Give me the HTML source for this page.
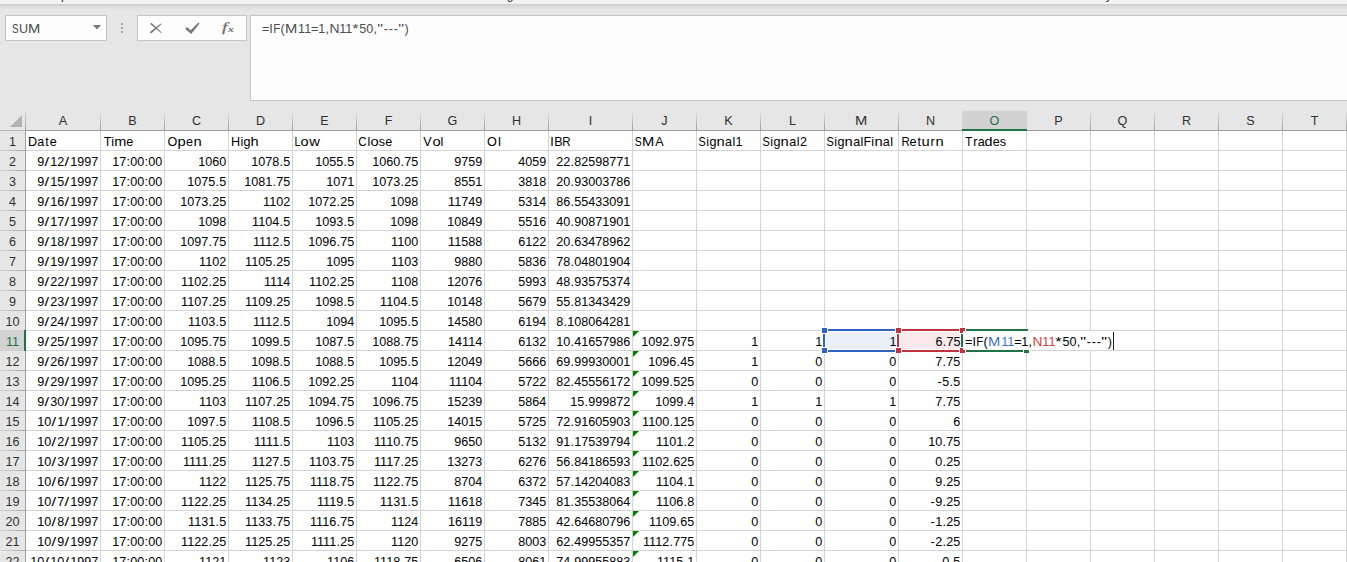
<!DOCTYPE html>
<html lang="en"><head><meta charset="utf-8"><title>Excel - formula editing</title>
<style>
html,body{margin:0;padding:0}
body{width:1347px;height:562px;overflow:hidden;position:relative;background:#e6e6e6;font-family:"Liberation Sans",sans-serif;font-size:12.6px;color:#000}
div,span{box-sizing:border-box}
i{font-style:normal}
.abs,.c,.rh,.ch,.vl,.hl{position:absolute}
#top{left:0;top:0;width:1347px;height:4px;background:#f3f2f1}
#shade{left:0;top:4px;width:1347px;height:6px;background:linear-gradient(#cbcac9,#d3d3d3 20%,#dedede 55%,#e6e6e6)}
.rib{top:-13px;font-size:12px;color:#333;white-space:nowrap;height:17px;line-height:17px}
.box{background:#fdfdfd;border:1px solid #c5c5c5}
#name{left:5px;top:15px;width:102px;height:26px}
#name span{position:absolute;left:6px;top:1px;line-height:24px;color:#4a4a4a;white-space:nowrap}
#btns{left:137px;top:15px;width:110px;height:26px}
#fbar{left:250px;top:15px;width:1100px;height:86px}
#ftxt{left:262.1px;top:17px;line-height:24px;color:#4d4d4d;white-space:nowrap}
#sheet{left:0;top:111px;width:1347px;height:451px;background:#fff;overflow:hidden}
.c{height:20px;line-height:20px;white-space:nowrap;overflow:visible;margin-top:1px}
.r{text-align:right}
.vl{width:1px;background:#d4d4d4;top:20px;height:440px}
.hl{height:1px;background:#d4d4d4;left:26px;width:1321px}
.ch{top:0;height:19px;line-height:21px;text-align:center;color:#303030;background:#e6e6e6}
.cs{top:0;width:1px;height:19px;background:linear-gradient(rgba(155,155,155,0),#9b9b9b)}
.rh{left:0;width:25px;height:19px;line-height:23px;text-align:center;color:#303030;background:#e6e6e6;overflow:hidden}
.rs{left:0;width:25px;height:1px;background:linear-gradient(90deg,rgba(171,171,171,.3),#ababab)}
.tri{width:0;height:0;border-top:6px solid #008000;border-right:6px solid transparent}
</style></head><body>
<div class="abs" id="top"></div><div class="abs" id="shade"></div>
<div class="abs rib" style="left:47px">Clipboard</div><div class="abs rib" style="left:493.5px">Alignment</div><div class="abs rib" style="left:1094.5px">Styles</div>
<div class="abs box" id="name"><span><i style="margin:0 -0.9px 0 -0.9px;display:inline-block;transform:scaleX(0.79)">S</i><i style="margin:0 0.25px 0 0.25px">U</i><i style="margin:0 1.05px 0 1.05px;display:inline-block;transform:scaleX(1.17)">M</i></span><svg class="abs" style="left:87px;top:9px" width="8" height="5" viewBox="0 0 8 5"><path d="M0 0H8L4 4.5Z" fill="#777"/></svg></div>
<svg class="abs" style="left:121px;top:23px" width="2" height="10"><rect x="0" y="0" width="2" height="2" fill="#a6a6a6"/><rect x="0" y="4" width="2" height="2" fill="#a6a6a6"/><rect x="0" y="8" width="2" height="2" fill="#a6a6a6"/></svg>
<div class="abs box" id="btns"></div><svg class="abs" style="left:145px;top:18px" width="100" height="20" viewBox="145 18 100 20"><path d="M150.2 24.1L151.4 22.8L161.7 32.4L161.0 33.1Z" fill="#767676"/><path d="M149.9 31.9L151.2 33.4L161.5 24.3L160.8 23.6Z" fill="#767676"/><path d="M187.0 27.1L190.7 30.3L198.4 22.6L199.5 23.5L191.2 34.1L185.3 29.0Z" fill="#777"/></svg><span class="abs" style="left:221.6px;top:16.6px;font:italic 13px/20px 'Liberation Serif',serif;color:#6e6e6e;-webkit-text-stroke:.25px #6e6e6e;white-space:nowrap"><span style="display:inline-block;transform:scaleX(1.5);transform-origin:0 50%">f</span><span style="font-size:8px;font-weight:bold;-webkit-text-stroke:0;display:inline-block;transform:scaleX(1.5);transform-origin:0 50%;margin-left:3.1px;position:relative;top:1.1px">x</span></span>
<div class="abs box" id="fbar"></div><div class="abs" id="ftxt"><i style="margin:0 -0.18px 0 -0.18px">=</i><i style="margin:0 0.25px 0 0.25px">I</i><i style="margin:0 -0.35px 0 -0.35px;display:inline-block;transform:scaleX(0.91)">F</i><i style="margin:0 0.4px 0 0.4px">(</i><i style="margin:0 1.25px 0 1.25px;display:inline-block;transform:scaleX(1.17)">M</i>11<i style="margin:0 -0.18px 0 -0.18px">=</i>1<i style="margin:0 0.25px 0 0.25px">,</i><i style="margin:0 0.45px 0 0.45px;display:inline-block;transform:scaleX(1.1)">N</i>11<i style="margin:0 1.05px 0 1.05px;display:inline-block;transform:scaleX(1.3)">*</i>50<i style="margin:0 0.25px 0 0.25px">,</i><i style="margin:0 0.76px 0 0.76px;display:inline-block;transform:scaleX(1.3)">&quot;</i><i style="margin:0 0.4px 0 0.4px">-</i><i style="margin:0 0.4px 0 0.4px">-</i><i style="margin:0 0.4px 0 0.4px">-</i><i style="margin:0 0.76px 0 0.76px;display:inline-block;transform:scaleX(1.3)">&quot;</i><i style="margin:0 0.4px 0 0.4px">)</i></div>
<div class="abs" id="sheet">
<div class="abs" style="left:0;top:0;width:1347px;height:19px;background:#e6e6e6"></div><div class="abs" style="left:0;top:19px;width:1347px;height:1px;background:#9e9e9e"></div><div class="abs" style="left:0;top:19px;width:25px;height:1px;background:#b4b4b4"></div><div class="abs" style="left:0;top:20px;width:25px;height:440px;background:#e6e6e6"></div><div class="abs" style="left:25px;top:0;width:1px;height:460px;background:linear-gradient(rgba(160,160,160,.2),#a0a0a0 19px)"></div><svg class="abs" style="left:10px;top:4px" width="13" height="13"><path d="M12 0V12H0Z" fill="#b2b2b2"/></svg>
<div class="ch" style="left:26px;width:74px">A</div><div class="abs cs" style="left:100px"></div><div class="ch" style="left:101px;width:63px">B</div><div class="abs cs" style="left:164px"></div><div class="ch" style="left:165px;width:63px">C</div><div class="abs cs" style="left:228px"></div><div class="ch" style="left:229px;width:63px">D</div><div class="abs cs" style="left:292px"></div><div class="ch" style="left:293px;width:63px">E</div><div class="abs cs" style="left:356px"></div><div class="ch" style="left:357px;width:63px">F</div><div class="abs cs" style="left:420px"></div><div class="ch" style="left:421px;width:63px">G</div><div class="abs cs" style="left:484px"></div><div class="ch" style="left:485px;width:63px">H</div><div class="abs cs" style="left:548px"></div><div class="ch" style="left:549px;width:83px">I</div><div class="abs cs" style="left:632px"></div><div class="ch" style="left:633px;width:63px">J</div><div class="abs cs" style="left:696px"></div><div class="ch" style="left:697px;width:63px">K</div><div class="abs cs" style="left:760px"></div><div class="ch" style="left:761px;width:63px">L</div><div class="abs cs" style="left:824px"></div><div class="ch" style="left:825px;width:73px"><i style="margin:0 1.25px 0 1.25px;display:inline-block;transform:scaleX(1.17)">M</i></div><div class="abs cs" style="left:898px"></div><div class="ch" style="left:899px;width:63px">N</div><div class="ch" style="left:962px;width:65px;background:#d2d2d2;color:#217346;height:20px;border-bottom:2px solid #217346">O</div><div class="ch" style="left:1027px;width:63px">P</div><div class="abs cs" style="left:1090px"></div><div class="ch" style="left:1091px;width:63px">Q</div><div class="abs cs" style="left:1154px"></div><div class="ch" style="left:1155px;width:63px">R</div><div class="abs cs" style="left:1218px"></div><div class="ch" style="left:1219px;width:63px">S</div><div class="abs cs" style="left:1282px"></div><div class="ch" style="left:1283px;width:63px">T</div><div class="abs cs" style="left:1346px"></div>
<div class="vl" style="left:100px"></div><div class="vl" style="left:164px"></div><div class="vl" style="left:228px"></div><div class="vl" style="left:292px"></div><div class="vl" style="left:356px"></div><div class="vl" style="left:420px"></div><div class="vl" style="left:484px"></div><div class="vl" style="left:548px"></div><div class="vl" style="left:632px"></div><div class="vl" style="left:696px"></div><div class="vl" style="left:760px"></div><div class="vl" style="left:824px"></div><div class="vl" style="left:898px"></div><div class="vl" style="left:962px"></div><div class="vl" style="left:1026px"></div><div class="vl" style="left:1090px"></div><div class="vl" style="left:1154px"></div><div class="vl" style="left:1218px"></div><div class="vl" style="left:1282px"></div><div class="vl" style="left:1346px"></div><div class="hl" style="top:39px"></div><div class="hl" style="top:59px"></div><div class="hl" style="top:79px"></div><div class="hl" style="top:99px"></div><div class="hl" style="top:119px"></div><div class="hl" style="top:139px"></div><div class="hl" style="top:159px"></div><div class="hl" style="top:179px"></div><div class="hl" style="top:199px"></div><div class="hl" style="top:219px"></div><div class="hl" style="top:239px"></div><div class="hl" style="top:259px"></div><div class="hl" style="top:279px"></div><div class="hl" style="top:299px"></div><div class="hl" style="top:319px"></div><div class="hl" style="top:339px"></div><div class="hl" style="top:359px"></div><div class="hl" style="top:379px"></div><div class="hl" style="top:399px"></div><div class="hl" style="top:419px"></div><div class="hl" style="top:439px"></div><div class="hl" style="top:459px"></div>
<div class="rh" style="top:20px">1</div><div class="abs rs" style="top:39px"></div><div class="rh" style="top:40px">2</div><div class="abs rs" style="top:59px"></div><div class="rh" style="top:60px">3</div><div class="abs rs" style="top:79px"></div><div class="rh" style="top:80px">4</div><div class="abs rs" style="top:99px"></div><div class="rh" style="top:100px">5</div><div class="abs rs" style="top:119px"></div><div class="rh" style="top:120px">6</div><div class="abs rs" style="top:139px"></div><div class="rh" style="top:140px">7</div><div class="abs rs" style="top:159px"></div><div class="rh" style="top:160px">8</div><div class="abs rs" style="top:179px"></div><div class="rh" style="top:180px">9</div><div class="abs rs" style="top:199px"></div><div class="rh" style="top:200px">10</div><div class="abs rs" style="top:219px"></div><div class="rh" style="top:219px;height:21px;line-height:25px;background:#d2d2d2;color:#217346;width:26px;border-right:2px solid #217346;padding-left:1px">11</div><div class="rh" style="top:240px">12</div><div class="abs rs" style="top:259px"></div><div class="rh" style="top:260px">13</div><div class="abs rs" style="top:279px"></div><div class="rh" style="top:280px">14</div><div class="abs rs" style="top:299px"></div><div class="rh" style="top:300px">15</div><div class="abs rs" style="top:319px"></div><div class="rh" style="top:320px">16</div><div class="abs rs" style="top:339px"></div><div class="rh" style="top:340px">17</div><div class="abs rs" style="top:359px"></div><div class="rh" style="top:360px">18</div><div class="abs rs" style="top:379px"></div><div class="rh" style="top:380px">19</div><div class="abs rs" style="top:399px"></div><div class="rh" style="top:400px">20</div><div class="abs rs" style="top:419px"></div><div class="rh" style="top:420px">21</div><div class="abs rs" style="top:439px"></div><div class="rh" style="top:440px">22</div><div class="abs rs" style="top:459px"></div>
<div class="c" style="left:27.89px;top:20px"><i style="margin:0 0.07px 0 0.07px">D</i><i style="margin:0 0.11px 0 0.11px">a</i><i style="margin:0 0.86px 0 0.86px">t</i><i style="margin:0 0.11px 0 0.11px">e</i></div><div class="c" style="left:103.95px;top:20px"><i style="margin:0 -0.3px 0 -0.3px">T</i><i style="margin:0 0.15px 0 0.15px">i</i><i style="margin:0 0.8px 0 0.8px;display:inline-block;transform:scaleX(1.15)">m</i>e</div><div class="c" style="left:167.22px;top:20px"><i style="margin:0 0.27px 0 0.27px">O</i><i style="margin:0 0.67px 0 0.67px;display:inline-block;transform:scaleX(1.17)">p</i><i style="margin:0 0.17px 0 0.17px">e</i><i style="margin:0 0.67px 0 0.67px;display:inline-block;transform:scaleX(1.17)">n</i></div><div class="c" style="left:231.12px;top:20px">H<i style="margin:0 0.18px 0 0.18px">i</i><i style="margin:0 0.07px 0 0.07px">g</i><i style="margin:0 0.57px 0 0.57px;display:inline-block;transform:scaleX(1.16)">h</i></div><div class="c" style="left:294.78px;top:20px"><i style="margin:0 -0.49px 0 -0.49px;display:inline-block;transform:scaleX(0.86)">L</i><i style="margin:0 0.51px 0 0.51px;display:inline-block;transform:scaleX(1.15)">o</i><i style="margin:0 0.97px 0 0.97px;display:inline-block;transform:scaleX(1.17)">w</i></div><div class="c" style="left:358.83px;top:20px"><i style="margin:0 -0.38px 0 -0.38px;display:inline-block;transform:scaleX(0.92)">C</i><i style="margin:0 0.27px 0 0.27px">l</i><i style="margin:0 0.67px 0 0.67px;display:inline-block;transform:scaleX(1.17)">o</i>s<i style="margin:0 0.17px 0 0.17px">e</i></div><div class="c" style="left:422.77px;top:20px"><i style="margin:0 0.43px 0 0.43px">V</i><i style="margin:0 0.63px 0 0.63px;display:inline-block;transform:scaleX(1.17)">o</i><i style="margin:0 0.24px 0 0.24px">l</i></div><div class="c" style="left:486.5px;top:20px"><i style="margin:0 0.4px 0 0.4px">O</i><i style="margin:0 0.55px 0 0.55px">I</i></div><div class="c" style="left:549.93px;top:20px"><i style="margin:0 0.41px 0 0.41px">I</i>B<i style="margin:0 -0.38px 0 -0.38px;display:inline-block;transform:scaleX(0.92)">R</i></div><div class="c" style="left:635px;top:20px"><i style="margin:0 -0.7px 0 -0.7px;display:inline-block;transform:scaleX(0.83)">S</i><i style="margin:0 1.25px 0 1.25px;display:inline-block;transform:scaleX(1.17)">M</i><i style="margin:0 0.3px 0 0.3px">A</i></div><div class="c" style="left:698.87px;top:20px"><i style="margin:0 -0.57px 0 -0.57px;display:inline-block;transform:scaleX(0.86)">S</i><i style="margin:0 0.23px 0 0.23px">i</i><i style="margin:0 0.13px 0 0.13px">g</i><i style="margin:0 0.63px 0 0.63px;display:inline-block;transform:scaleX(1.17)">n</i><i style="margin:0 0.13px 0 0.13px">a</i><i style="margin:0 0.23px 0 0.23px">l</i><i style="margin:0 0.13px 0 0.13px">1</i></div><div class="c" style="left:762.74px;top:20px"><i style="margin:0 -0.54px 0 -0.54px;display:inline-block;transform:scaleX(0.87)">S</i><i style="margin:0 0.27px 0 0.27px">i</i><i style="margin:0 0.16px 0 0.16px">g</i><i style="margin:0 0.66px 0 0.66px;display:inline-block;transform:scaleX(1.17)">n</i><i style="margin:0 0.16px 0 0.16px">a</i><i style="margin:0 0.27px 0 0.27px">l</i><i style="margin:0 0.16px 0 0.16px">2</i></div><div class="c" style="left:826.63px;top:20px"><i style="margin:0 -0.53px 0 -0.53px;display:inline-block;transform:scaleX(0.87)">S</i><i style="margin:0 0.27px 0 0.27px">i</i><i style="margin:0 0.17px 0 0.17px">g</i><i style="margin:0 0.67px 0 0.67px;display:inline-block;transform:scaleX(1.17)">n</i><i style="margin:0 0.17px 0 0.17px">a</i><i style="margin:0 0.27px 0 0.27px">l</i><i style="margin:0 -0.18px 0 -0.18px">F</i><i style="margin:0 0.27px 0 0.27px">i</i><i style="margin:0 0.67px 0 0.67px;display:inline-block;transform:scaleX(1.17)">n</i><i style="margin:0 0.17px 0 0.17px">a</i><i style="margin:0 0.27px 0 0.27px">l</i></div><div class="c" style="left:901.08px;top:20px"><i style="margin:0 -0.42px 0 -0.42px;display:inline-block;transform:scaleX(0.91)">R</i><i style="margin:0 0.12px 0 0.12px">e</i><i style="margin:0 0.87px 0 0.87px">t</i><i style="margin:0 0.62px 0 0.62px;display:inline-block;transform:scaleX(1.17)">u</i><i style="margin:0 0.53px 0 0.53px">r</i><i style="margin:0 0.62px 0 0.62px;display:inline-block;transform:scaleX(1.17)">n</i></div><div class="c" style="left:965.8px;top:20px"><i style="margin:0 -0.35px 0 -0.35px;display:inline-block;transform:scaleX(0.91)">T</i><i style="margin:0 0.4px 0 0.4px">r</i>a<i style="margin:0 0.5px 0 0.5px;display:inline-block;transform:scaleX(1.14)">d</i>e<i style="margin:0 -0.15px 0 -0.15px">s</i></div>
<div class="c r" style="left:26px;top:40px;width:72.2px">9<i style="margin:0 1.25px 0 1.25px;display:inline-block;transform:scaleX(1.3)">/</i>12<i style="margin:0 1.25px 0 1.25px;display:inline-block;transform:scaleX(1.3)">/</i>1997</div><div class="c r" style="left:101px;top:40px;width:61.2px">17<i style="margin:0 0.25px 0 0.25px">:</i>00<i style="margin:0 0.25px 0 0.25px">:</i>00</div><div class="c r" style="left:165px;top:40px;width:61.2px">1060</div><div class="c r" style="left:229px;top:40px;width:61.2px">1078<i style="margin:0 0.25px 0 0.25px">.</i>5</div><div class="c r" style="left:293px;top:40px;width:61.2px">1055<i style="margin:0 0.25px 0 0.25px">.</i>5</div><div class="c r" style="left:357px;top:40px;width:61.2px">1060<i style="margin:0 0.25px 0 0.25px">.</i>75</div><div class="c r" style="left:421px;top:40px;width:61.2px">9759</div><div class="c r" style="left:485px;top:40px;width:61.2px">4059</div><div class="c r" style="left:549px;top:40px;width:81.2px">22<i style="margin:0 0.25px 0 0.25px">.</i>82598771</div>
<div class="c r" style="left:26px;top:60px;width:72.2px">9<i style="margin:0 1.25px 0 1.25px;display:inline-block;transform:scaleX(1.3)">/</i>15<i style="margin:0 1.25px 0 1.25px;display:inline-block;transform:scaleX(1.3)">/</i>1997</div><div class="c r" style="left:101px;top:60px;width:61.2px">17<i style="margin:0 0.25px 0 0.25px">:</i>00<i style="margin:0 0.25px 0 0.25px">:</i>00</div><div class="c r" style="left:165px;top:60px;width:61.2px">1075<i style="margin:0 0.25px 0 0.25px">.</i>5</div><div class="c r" style="left:229px;top:60px;width:61.2px">1081<i style="margin:0 0.25px 0 0.25px">.</i>75</div><div class="c r" style="left:293px;top:60px;width:61.2px">1071</div><div class="c r" style="left:357px;top:60px;width:61.2px">1073<i style="margin:0 0.25px 0 0.25px">.</i>25</div><div class="c r" style="left:421px;top:60px;width:61.2px">8551</div><div class="c r" style="left:485px;top:60px;width:61.2px">3818</div><div class="c r" style="left:549px;top:60px;width:81.2px">20<i style="margin:0 0.25px 0 0.25px">.</i>93003786</div>
<div class="c r" style="left:26px;top:80px;width:72.2px">9<i style="margin:0 1.25px 0 1.25px;display:inline-block;transform:scaleX(1.3)">/</i>16<i style="margin:0 1.25px 0 1.25px;display:inline-block;transform:scaleX(1.3)">/</i>1997</div><div class="c r" style="left:101px;top:80px;width:61.2px">17<i style="margin:0 0.25px 0 0.25px">:</i>00<i style="margin:0 0.25px 0 0.25px">:</i>00</div><div class="c r" style="left:165px;top:80px;width:61.2px">1073<i style="margin:0 0.25px 0 0.25px">.</i>25</div><div class="c r" style="left:229px;top:80px;width:61.2px">1102</div><div class="c r" style="left:293px;top:80px;width:61.2px">1072<i style="margin:0 0.25px 0 0.25px">.</i>25</div><div class="c r" style="left:357px;top:80px;width:61.2px">1098</div><div class="c r" style="left:421px;top:80px;width:61.2px">11749</div><div class="c r" style="left:485px;top:80px;width:61.2px">5314</div><div class="c r" style="left:549px;top:80px;width:81.2px">86<i style="margin:0 0.25px 0 0.25px">.</i>55433091</div>
<div class="c r" style="left:26px;top:100px;width:72.2px">9<i style="margin:0 1.25px 0 1.25px;display:inline-block;transform:scaleX(1.3)">/</i>17<i style="margin:0 1.25px 0 1.25px;display:inline-block;transform:scaleX(1.3)">/</i>1997</div><div class="c r" style="left:101px;top:100px;width:61.2px">17<i style="margin:0 0.25px 0 0.25px">:</i>00<i style="margin:0 0.25px 0 0.25px">:</i>00</div><div class="c r" style="left:165px;top:100px;width:61.2px">1098</div><div class="c r" style="left:229px;top:100px;width:61.2px">1104<i style="margin:0 0.25px 0 0.25px">.</i>5</div><div class="c r" style="left:293px;top:100px;width:61.2px">1093<i style="margin:0 0.25px 0 0.25px">.</i>5</div><div class="c r" style="left:357px;top:100px;width:61.2px">1098</div><div class="c r" style="left:421px;top:100px;width:61.2px">10849</div><div class="c r" style="left:485px;top:100px;width:61.2px">5516</div><div class="c r" style="left:549px;top:100px;width:81.2px">40<i style="margin:0 0.25px 0 0.25px">.</i>90871901</div>
<div class="c r" style="left:26px;top:120px;width:72.2px">9<i style="margin:0 1.25px 0 1.25px;display:inline-block;transform:scaleX(1.3)">/</i>18<i style="margin:0 1.25px 0 1.25px;display:inline-block;transform:scaleX(1.3)">/</i>1997</div><div class="c r" style="left:101px;top:120px;width:61.2px">17<i style="margin:0 0.25px 0 0.25px">:</i>00<i style="margin:0 0.25px 0 0.25px">:</i>00</div><div class="c r" style="left:165px;top:120px;width:61.2px">1097<i style="margin:0 0.25px 0 0.25px">.</i>75</div><div class="c r" style="left:229px;top:120px;width:61.2px">1112<i style="margin:0 0.25px 0 0.25px">.</i>5</div><div class="c r" style="left:293px;top:120px;width:61.2px">1096<i style="margin:0 0.25px 0 0.25px">.</i>75</div><div class="c r" style="left:357px;top:120px;width:61.2px">1100</div><div class="c r" style="left:421px;top:120px;width:61.2px">11588</div><div class="c r" style="left:485px;top:120px;width:61.2px">6122</div><div class="c r" style="left:549px;top:120px;width:81.2px">20<i style="margin:0 0.25px 0 0.25px">.</i>63478962</div>
<div class="c r" style="left:26px;top:140px;width:72.2px">9<i style="margin:0 1.25px 0 1.25px;display:inline-block;transform:scaleX(1.3)">/</i>19<i style="margin:0 1.25px 0 1.25px;display:inline-block;transform:scaleX(1.3)">/</i>1997</div><div class="c r" style="left:101px;top:140px;width:61.2px">17<i style="margin:0 0.25px 0 0.25px">:</i>00<i style="margin:0 0.25px 0 0.25px">:</i>00</div><div class="c r" style="left:165px;top:140px;width:61.2px">1102</div><div class="c r" style="left:229px;top:140px;width:61.2px">1105<i style="margin:0 0.25px 0 0.25px">.</i>25</div><div class="c r" style="left:293px;top:140px;width:61.2px">1095</div><div class="c r" style="left:357px;top:140px;width:61.2px">1103</div><div class="c r" style="left:421px;top:140px;width:61.2px">9880</div><div class="c r" style="left:485px;top:140px;width:61.2px">5836</div><div class="c r" style="left:549px;top:140px;width:81.2px">78<i style="margin:0 0.25px 0 0.25px">.</i>04801904</div>
<div class="c r" style="left:26px;top:160px;width:72.2px">9<i style="margin:0 1.25px 0 1.25px;display:inline-block;transform:scaleX(1.3)">/</i>22<i style="margin:0 1.25px 0 1.25px;display:inline-block;transform:scaleX(1.3)">/</i>1997</div><div class="c r" style="left:101px;top:160px;width:61.2px">17<i style="margin:0 0.25px 0 0.25px">:</i>00<i style="margin:0 0.25px 0 0.25px">:</i>00</div><div class="c r" style="left:165px;top:160px;width:61.2px">1102<i style="margin:0 0.25px 0 0.25px">.</i>25</div><div class="c r" style="left:229px;top:160px;width:61.2px">1114</div><div class="c r" style="left:293px;top:160px;width:61.2px">1102<i style="margin:0 0.25px 0 0.25px">.</i>25</div><div class="c r" style="left:357px;top:160px;width:61.2px">1108</div><div class="c r" style="left:421px;top:160px;width:61.2px">12076</div><div class="c r" style="left:485px;top:160px;width:61.2px">5993</div><div class="c r" style="left:549px;top:160px;width:81.2px">48<i style="margin:0 0.25px 0 0.25px">.</i>93575374</div>
<div class="c r" style="left:26px;top:180px;width:72.2px">9<i style="margin:0 1.25px 0 1.25px;display:inline-block;transform:scaleX(1.3)">/</i>23<i style="margin:0 1.25px 0 1.25px;display:inline-block;transform:scaleX(1.3)">/</i>1997</div><div class="c r" style="left:101px;top:180px;width:61.2px">17<i style="margin:0 0.25px 0 0.25px">:</i>00<i style="margin:0 0.25px 0 0.25px">:</i>00</div><div class="c r" style="left:165px;top:180px;width:61.2px">1107<i style="margin:0 0.25px 0 0.25px">.</i>25</div><div class="c r" style="left:229px;top:180px;width:61.2px">1109<i style="margin:0 0.25px 0 0.25px">.</i>25</div><div class="c r" style="left:293px;top:180px;width:61.2px">1098<i style="margin:0 0.25px 0 0.25px">.</i>5</div><div class="c r" style="left:357px;top:180px;width:61.2px">1104<i style="margin:0 0.25px 0 0.25px">.</i>5</div><div class="c r" style="left:421px;top:180px;width:61.2px">10148</div><div class="c r" style="left:485px;top:180px;width:61.2px">5679</div><div class="c r" style="left:549px;top:180px;width:81.2px">55<i style="margin:0 0.25px 0 0.25px">.</i>81343429</div>
<div class="c r" style="left:26px;top:200px;width:72.2px">9<i style="margin:0 1.25px 0 1.25px;display:inline-block;transform:scaleX(1.3)">/</i>24<i style="margin:0 1.25px 0 1.25px;display:inline-block;transform:scaleX(1.3)">/</i>1997</div><div class="c r" style="left:101px;top:200px;width:61.2px">17<i style="margin:0 0.25px 0 0.25px">:</i>00<i style="margin:0 0.25px 0 0.25px">:</i>00</div><div class="c r" style="left:165px;top:200px;width:61.2px">1103<i style="margin:0 0.25px 0 0.25px">.</i>5</div><div class="c r" style="left:229px;top:200px;width:61.2px">1112<i style="margin:0 0.25px 0 0.25px">.</i>5</div><div class="c r" style="left:293px;top:200px;width:61.2px">1094</div><div class="c r" style="left:357px;top:200px;width:61.2px">1095<i style="margin:0 0.25px 0 0.25px">.</i>5</div><div class="c r" style="left:421px;top:200px;width:61.2px">14580</div><div class="c r" style="left:485px;top:200px;width:61.2px">6194</div><div class="c r" style="left:549px;top:200px;width:81.2px">8<i style="margin:0 0.25px 0 0.25px">.</i>108064281</div>
<div class="c r" style="left:26px;top:220px;width:72.2px">9<i style="margin:0 1.25px 0 1.25px;display:inline-block;transform:scaleX(1.3)">/</i>25<i style="margin:0 1.25px 0 1.25px;display:inline-block;transform:scaleX(1.3)">/</i>1997</div><div class="c r" style="left:101px;top:220px;width:61.2px">17<i style="margin:0 0.25px 0 0.25px">:</i>00<i style="margin:0 0.25px 0 0.25px">:</i>00</div><div class="c r" style="left:165px;top:220px;width:61.2px">1095<i style="margin:0 0.25px 0 0.25px">.</i>75</div><div class="c r" style="left:229px;top:220px;width:61.2px">1099<i style="margin:0 0.25px 0 0.25px">.</i>5</div><div class="c r" style="left:293px;top:220px;width:61.2px">1087<i style="margin:0 0.25px 0 0.25px">.</i>5</div><div class="c r" style="left:357px;top:220px;width:61.2px">1088<i style="margin:0 0.25px 0 0.25px">.</i>75</div><div class="c r" style="left:421px;top:220px;width:61.2px">14114</div><div class="c r" style="left:485px;top:220px;width:61.2px">6132</div><div class="c r" style="left:549px;top:220px;width:81.2px">10<i style="margin:0 0.25px 0 0.25px">.</i>41657986</div><div class="c r" style="left:633px;top:220px;width:61.2px">1092<i style="margin:0 0.25px 0 0.25px">.</i>975</div><div class="c r" style="left:697px;top:220px;width:61.2px">1</div><div class="c r" style="left:761px;top:220px;width:61.2px">1</div><div class="c r" style="left:825px;top:220px;width:71.2px">1</div><div class="c r" style="left:899px;top:220px;width:61.2px">6<i style="margin:0 0.25px 0 0.25px">.</i>75</div>
<div class="c r" style="left:26px;top:240px;width:72.2px">9<i style="margin:0 1.25px 0 1.25px;display:inline-block;transform:scaleX(1.3)">/</i>26<i style="margin:0 1.25px 0 1.25px;display:inline-block;transform:scaleX(1.3)">/</i>1997</div><div class="c r" style="left:101px;top:240px;width:61.2px">17<i style="margin:0 0.25px 0 0.25px">:</i>00<i style="margin:0 0.25px 0 0.25px">:</i>00</div><div class="c r" style="left:165px;top:240px;width:61.2px">1088<i style="margin:0 0.25px 0 0.25px">.</i>5</div><div class="c r" style="left:229px;top:240px;width:61.2px">1098<i style="margin:0 0.25px 0 0.25px">.</i>5</div><div class="c r" style="left:293px;top:240px;width:61.2px">1088<i style="margin:0 0.25px 0 0.25px">.</i>5</div><div class="c r" style="left:357px;top:240px;width:61.2px">1095<i style="margin:0 0.25px 0 0.25px">.</i>5</div><div class="c r" style="left:421px;top:240px;width:61.2px">12049</div><div class="c r" style="left:485px;top:240px;width:61.2px">5666</div><div class="c r" style="left:549px;top:240px;width:81.2px">69<i style="margin:0 0.25px 0 0.25px">.</i>99930001</div><div class="c r" style="left:633px;top:240px;width:61.2px">1096<i style="margin:0 0.25px 0 0.25px">.</i>45</div><div class="c r" style="left:697px;top:240px;width:61.2px">1</div><div class="c r" style="left:761px;top:240px;width:61.2px">0</div><div class="c r" style="left:825px;top:240px;width:71.2px">0</div><div class="c r" style="left:899px;top:240px;width:61.2px">7<i style="margin:0 0.25px 0 0.25px">.</i>75</div>
<div class="c r" style="left:26px;top:260px;width:72.2px">9<i style="margin:0 1.25px 0 1.25px;display:inline-block;transform:scaleX(1.3)">/</i>29<i style="margin:0 1.25px 0 1.25px;display:inline-block;transform:scaleX(1.3)">/</i>1997</div><div class="c r" style="left:101px;top:260px;width:61.2px">17<i style="margin:0 0.25px 0 0.25px">:</i>00<i style="margin:0 0.25px 0 0.25px">:</i>00</div><div class="c r" style="left:165px;top:260px;width:61.2px">1095<i style="margin:0 0.25px 0 0.25px">.</i>25</div><div class="c r" style="left:229px;top:260px;width:61.2px">1106<i style="margin:0 0.25px 0 0.25px">.</i>5</div><div class="c r" style="left:293px;top:260px;width:61.2px">1092<i style="margin:0 0.25px 0 0.25px">.</i>25</div><div class="c r" style="left:357px;top:260px;width:61.2px">1104</div><div class="c r" style="left:421px;top:260px;width:61.2px">11104</div><div class="c r" style="left:485px;top:260px;width:61.2px">5722</div><div class="c r" style="left:549px;top:260px;width:81.2px">82<i style="margin:0 0.25px 0 0.25px">.</i>45556172</div><div class="c r" style="left:633px;top:260px;width:61.2px">1099<i style="margin:0 0.25px 0 0.25px">.</i>525</div><div class="c r" style="left:697px;top:260px;width:61.2px">0</div><div class="c r" style="left:761px;top:260px;width:61.2px">0</div><div class="c r" style="left:825px;top:260px;width:71.2px">0</div><div class="c r" style="left:899px;top:260px;width:61.2px"><i style="margin:0 0.4px 0 0.4px">-</i>5<i style="margin:0 0.25px 0 0.25px">.</i>5</div>
<div class="c r" style="left:26px;top:280px;width:72.2px">9<i style="margin:0 1.25px 0 1.25px;display:inline-block;transform:scaleX(1.3)">/</i>30<i style="margin:0 1.25px 0 1.25px;display:inline-block;transform:scaleX(1.3)">/</i>1997</div><div class="c r" style="left:101px;top:280px;width:61.2px">17<i style="margin:0 0.25px 0 0.25px">:</i>00<i style="margin:0 0.25px 0 0.25px">:</i>00</div><div class="c r" style="left:165px;top:280px;width:61.2px">1103</div><div class="c r" style="left:229px;top:280px;width:61.2px">1107<i style="margin:0 0.25px 0 0.25px">.</i>25</div><div class="c r" style="left:293px;top:280px;width:61.2px">1094<i style="margin:0 0.25px 0 0.25px">.</i>75</div><div class="c r" style="left:357px;top:280px;width:61.2px">1096<i style="margin:0 0.25px 0 0.25px">.</i>75</div><div class="c r" style="left:421px;top:280px;width:61.2px">15239</div><div class="c r" style="left:485px;top:280px;width:61.2px">5864</div><div class="c r" style="left:549px;top:280px;width:81.2px">15<i style="margin:0 0.25px 0 0.25px">.</i>999872</div><div class="c r" style="left:633px;top:280px;width:61.2px">1099<i style="margin:0 0.25px 0 0.25px">.</i>4</div><div class="c r" style="left:697px;top:280px;width:61.2px">1</div><div class="c r" style="left:761px;top:280px;width:61.2px">1</div><div class="c r" style="left:825px;top:280px;width:71.2px">1</div><div class="c r" style="left:899px;top:280px;width:61.2px">7<i style="margin:0 0.25px 0 0.25px">.</i>75</div>
<div class="c r" style="left:26px;top:300px;width:72.2px">10<i style="margin:0 1.25px 0 1.25px;display:inline-block;transform:scaleX(1.3)">/</i>1<i style="margin:0 1.25px 0 1.25px;display:inline-block;transform:scaleX(1.3)">/</i>1997</div><div class="c r" style="left:101px;top:300px;width:61.2px">17<i style="margin:0 0.25px 0 0.25px">:</i>00<i style="margin:0 0.25px 0 0.25px">:</i>00</div><div class="c r" style="left:165px;top:300px;width:61.2px">1097<i style="margin:0 0.25px 0 0.25px">.</i>5</div><div class="c r" style="left:229px;top:300px;width:61.2px">1108<i style="margin:0 0.25px 0 0.25px">.</i>5</div><div class="c r" style="left:293px;top:300px;width:61.2px">1096<i style="margin:0 0.25px 0 0.25px">.</i>5</div><div class="c r" style="left:357px;top:300px;width:61.2px">1105<i style="margin:0 0.25px 0 0.25px">.</i>25</div><div class="c r" style="left:421px;top:300px;width:61.2px">14015</div><div class="c r" style="left:485px;top:300px;width:61.2px">5725</div><div class="c r" style="left:549px;top:300px;width:81.2px">72<i style="margin:0 0.25px 0 0.25px">.</i>91605903</div><div class="c r" style="left:633px;top:300px;width:61.2px">1100<i style="margin:0 0.25px 0 0.25px">.</i>125</div><div class="c r" style="left:697px;top:300px;width:61.2px">0</div><div class="c r" style="left:761px;top:300px;width:61.2px">0</div><div class="c r" style="left:825px;top:300px;width:71.2px">0</div><div class="c r" style="left:899px;top:300px;width:61.2px">6</div>
<div class="c r" style="left:26px;top:320px;width:72.2px">10<i style="margin:0 1.25px 0 1.25px;display:inline-block;transform:scaleX(1.3)">/</i>2<i style="margin:0 1.25px 0 1.25px;display:inline-block;transform:scaleX(1.3)">/</i>1997</div><div class="c r" style="left:101px;top:320px;width:61.2px">17<i style="margin:0 0.25px 0 0.25px">:</i>00<i style="margin:0 0.25px 0 0.25px">:</i>00</div><div class="c r" style="left:165px;top:320px;width:61.2px">1105<i style="margin:0 0.25px 0 0.25px">.</i>25</div><div class="c r" style="left:229px;top:320px;width:61.2px">1111<i style="margin:0 0.25px 0 0.25px">.</i>5</div><div class="c r" style="left:293px;top:320px;width:61.2px">1103</div><div class="c r" style="left:357px;top:320px;width:61.2px">1110<i style="margin:0 0.25px 0 0.25px">.</i>75</div><div class="c r" style="left:421px;top:320px;width:61.2px">9650</div><div class="c r" style="left:485px;top:320px;width:61.2px">5132</div><div class="c r" style="left:549px;top:320px;width:81.2px">91<i style="margin:0 0.25px 0 0.25px">.</i>17539794</div><div class="c r" style="left:633px;top:320px;width:61.2px">1101<i style="margin:0 0.25px 0 0.25px">.</i>2</div><div class="c r" style="left:697px;top:320px;width:61.2px">0</div><div class="c r" style="left:761px;top:320px;width:61.2px">0</div><div class="c r" style="left:825px;top:320px;width:71.2px">0</div><div class="c r" style="left:899px;top:320px;width:61.2px">10<i style="margin:0 0.25px 0 0.25px">.</i>75</div>
<div class="c r" style="left:26px;top:340px;width:72.2px">10<i style="margin:0 1.25px 0 1.25px;display:inline-block;transform:scaleX(1.3)">/</i>3<i style="margin:0 1.25px 0 1.25px;display:inline-block;transform:scaleX(1.3)">/</i>1997</div><div class="c r" style="left:101px;top:340px;width:61.2px">17<i style="margin:0 0.25px 0 0.25px">:</i>00<i style="margin:0 0.25px 0 0.25px">:</i>00</div><div class="c r" style="left:165px;top:340px;width:61.2px">1111<i style="margin:0 0.25px 0 0.25px">.</i>25</div><div class="c r" style="left:229px;top:340px;width:61.2px">1127<i style="margin:0 0.25px 0 0.25px">.</i>5</div><div class="c r" style="left:293px;top:340px;width:61.2px">1103<i style="margin:0 0.25px 0 0.25px">.</i>75</div><div class="c r" style="left:357px;top:340px;width:61.2px">1117<i style="margin:0 0.25px 0 0.25px">.</i>25</div><div class="c r" style="left:421px;top:340px;width:61.2px">13273</div><div class="c r" style="left:485px;top:340px;width:61.2px">6276</div><div class="c r" style="left:549px;top:340px;width:81.2px">56<i style="margin:0 0.25px 0 0.25px">.</i>84186593</div><div class="c r" style="left:633px;top:340px;width:61.2px">1102<i style="margin:0 0.25px 0 0.25px">.</i>625</div><div class="c r" style="left:697px;top:340px;width:61.2px">0</div><div class="c r" style="left:761px;top:340px;width:61.2px">0</div><div class="c r" style="left:825px;top:340px;width:71.2px">0</div><div class="c r" style="left:899px;top:340px;width:61.2px">0<i style="margin:0 0.25px 0 0.25px">.</i>25</div>
<div class="c r" style="left:26px;top:360px;width:72.2px">10<i style="margin:0 1.25px 0 1.25px;display:inline-block;transform:scaleX(1.3)">/</i>6<i style="margin:0 1.25px 0 1.25px;display:inline-block;transform:scaleX(1.3)">/</i>1997</div><div class="c r" style="left:101px;top:360px;width:61.2px">17<i style="margin:0 0.25px 0 0.25px">:</i>00<i style="margin:0 0.25px 0 0.25px">:</i>00</div><div class="c r" style="left:165px;top:360px;width:61.2px">1122</div><div class="c r" style="left:229px;top:360px;width:61.2px">1125<i style="margin:0 0.25px 0 0.25px">.</i>75</div><div class="c r" style="left:293px;top:360px;width:61.2px">1118<i style="margin:0 0.25px 0 0.25px">.</i>75</div><div class="c r" style="left:357px;top:360px;width:61.2px">1122<i style="margin:0 0.25px 0 0.25px">.</i>75</div><div class="c r" style="left:421px;top:360px;width:61.2px">8704</div><div class="c r" style="left:485px;top:360px;width:61.2px">6372</div><div class="c r" style="left:549px;top:360px;width:81.2px">57<i style="margin:0 0.25px 0 0.25px">.</i>14204083</div><div class="c r" style="left:633px;top:360px;width:61.2px">1104<i style="margin:0 0.25px 0 0.25px">.</i>1</div><div class="c r" style="left:697px;top:360px;width:61.2px">0</div><div class="c r" style="left:761px;top:360px;width:61.2px">0</div><div class="c r" style="left:825px;top:360px;width:71.2px">0</div><div class="c r" style="left:899px;top:360px;width:61.2px">9<i style="margin:0 0.25px 0 0.25px">.</i>25</div>
<div class="c r" style="left:26px;top:380px;width:72.2px">10<i style="margin:0 1.25px 0 1.25px;display:inline-block;transform:scaleX(1.3)">/</i>7<i style="margin:0 1.25px 0 1.25px;display:inline-block;transform:scaleX(1.3)">/</i>1997</div><div class="c r" style="left:101px;top:380px;width:61.2px">17<i style="margin:0 0.25px 0 0.25px">:</i>00<i style="margin:0 0.25px 0 0.25px">:</i>00</div><div class="c r" style="left:165px;top:380px;width:61.2px">1122<i style="margin:0 0.25px 0 0.25px">.</i>25</div><div class="c r" style="left:229px;top:380px;width:61.2px">1134<i style="margin:0 0.25px 0 0.25px">.</i>25</div><div class="c r" style="left:293px;top:380px;width:61.2px">1119<i style="margin:0 0.25px 0 0.25px">.</i>5</div><div class="c r" style="left:357px;top:380px;width:61.2px">1131<i style="margin:0 0.25px 0 0.25px">.</i>5</div><div class="c r" style="left:421px;top:380px;width:61.2px">11618</div><div class="c r" style="left:485px;top:380px;width:61.2px">7345</div><div class="c r" style="left:549px;top:380px;width:81.2px">81<i style="margin:0 0.25px 0 0.25px">.</i>35538064</div><div class="c r" style="left:633px;top:380px;width:61.2px">1106<i style="margin:0 0.25px 0 0.25px">.</i>8</div><div class="c r" style="left:697px;top:380px;width:61.2px">0</div><div class="c r" style="left:761px;top:380px;width:61.2px">0</div><div class="c r" style="left:825px;top:380px;width:71.2px">0</div><div class="c r" style="left:899px;top:380px;width:61.2px"><i style="margin:0 0.4px 0 0.4px">-</i>9<i style="margin:0 0.25px 0 0.25px">.</i>25</div>
<div class="c r" style="left:26px;top:400px;width:72.2px">10<i style="margin:0 1.25px 0 1.25px;display:inline-block;transform:scaleX(1.3)">/</i>8<i style="margin:0 1.25px 0 1.25px;display:inline-block;transform:scaleX(1.3)">/</i>1997</div><div class="c r" style="left:101px;top:400px;width:61.2px">17<i style="margin:0 0.25px 0 0.25px">:</i>00<i style="margin:0 0.25px 0 0.25px">:</i>00</div><div class="c r" style="left:165px;top:400px;width:61.2px">1131<i style="margin:0 0.25px 0 0.25px">.</i>5</div><div class="c r" style="left:229px;top:400px;width:61.2px">1133<i style="margin:0 0.25px 0 0.25px">.</i>75</div><div class="c r" style="left:293px;top:400px;width:61.2px">1116<i style="margin:0 0.25px 0 0.25px">.</i>75</div><div class="c r" style="left:357px;top:400px;width:61.2px">1124</div><div class="c r" style="left:421px;top:400px;width:61.2px">16119</div><div class="c r" style="left:485px;top:400px;width:61.2px">7885</div><div class="c r" style="left:549px;top:400px;width:81.2px">42<i style="margin:0 0.25px 0 0.25px">.</i>64680796</div><div class="c r" style="left:633px;top:400px;width:61.2px">1109<i style="margin:0 0.25px 0 0.25px">.</i>65</div><div class="c r" style="left:697px;top:400px;width:61.2px">0</div><div class="c r" style="left:761px;top:400px;width:61.2px">0</div><div class="c r" style="left:825px;top:400px;width:71.2px">0</div><div class="c r" style="left:899px;top:400px;width:61.2px"><i style="margin:0 0.4px 0 0.4px">-</i>1<i style="margin:0 0.25px 0 0.25px">.</i>25</div>
<div class="c r" style="left:26px;top:420px;width:72.2px">10<i style="margin:0 1.25px 0 1.25px;display:inline-block;transform:scaleX(1.3)">/</i>9<i style="margin:0 1.25px 0 1.25px;display:inline-block;transform:scaleX(1.3)">/</i>1997</div><div class="c r" style="left:101px;top:420px;width:61.2px">17<i style="margin:0 0.25px 0 0.25px">:</i>00<i style="margin:0 0.25px 0 0.25px">:</i>00</div><div class="c r" style="left:165px;top:420px;width:61.2px">1122<i style="margin:0 0.25px 0 0.25px">.</i>25</div><div class="c r" style="left:229px;top:420px;width:61.2px">1125<i style="margin:0 0.25px 0 0.25px">.</i>25</div><div class="c r" style="left:293px;top:420px;width:61.2px">1111<i style="margin:0 0.25px 0 0.25px">.</i>25</div><div class="c r" style="left:357px;top:420px;width:61.2px">1120</div><div class="c r" style="left:421px;top:420px;width:61.2px">9275</div><div class="c r" style="left:485px;top:420px;width:61.2px">8003</div><div class="c r" style="left:549px;top:420px;width:81.2px">62<i style="margin:0 0.25px 0 0.25px">.</i>49955357</div><div class="c r" style="left:633px;top:420px;width:61.2px">1112<i style="margin:0 0.25px 0 0.25px">.</i>775</div><div class="c r" style="left:697px;top:420px;width:61.2px">0</div><div class="c r" style="left:761px;top:420px;width:61.2px">0</div><div class="c r" style="left:825px;top:420px;width:71.2px">0</div><div class="c r" style="left:899px;top:420px;width:61.2px"><i style="margin:0 0.4px 0 0.4px">-</i>2<i style="margin:0 0.25px 0 0.25px">.</i>25</div>
<div class="c r" style="left:26px;top:440px;width:72.2px">10<i style="margin:0 1.25px 0 1.25px;display:inline-block;transform:scaleX(1.3)">/</i>10<i style="margin:0 1.25px 0 1.25px;display:inline-block;transform:scaleX(1.3)">/</i>1997</div><div class="c r" style="left:101px;top:440px;width:61.2px">17<i style="margin:0 0.25px 0 0.25px">:</i>00<i style="margin:0 0.25px 0 0.25px">:</i>00</div><div class="c r" style="left:165px;top:440px;width:61.2px">1121</div><div class="c r" style="left:229px;top:440px;width:61.2px">1123</div><div class="c r" style="left:293px;top:440px;width:61.2px">1106</div><div class="c r" style="left:357px;top:440px;width:61.2px">1118<i style="margin:0 0.25px 0 0.25px">.</i>75</div><div class="c r" style="left:421px;top:440px;width:61.2px">6506</div><div class="c r" style="left:485px;top:440px;width:61.2px">8061</div><div class="c r" style="left:549px;top:440px;width:81.2px">74<i style="margin:0 0.25px 0 0.25px">.</i>99955883</div><div class="c r" style="left:633px;top:440px;width:61.2px">1115<i style="margin:0 0.25px 0 0.25px">.</i>1</div><div class="c r" style="left:697px;top:440px;width:61.2px">0</div><div class="c r" style="left:761px;top:440px;width:61.2px">0</div><div class="c r" style="left:825px;top:440px;width:71.2px">0</div><div class="c r" style="left:899px;top:440px;width:61.2px"><i style="margin:0 0.4px 0 0.4px">-</i>0<i style="margin:0 0.25px 0 0.25px">.</i>5</div>
<div class="abs tri" style="left:633px;top:220px"></div><div class="abs tri" style="left:633px;top:240px"></div><div class="abs tri" style="left:633px;top:260px"></div><div class="abs tri" style="left:633px;top:280px"></div><div class="abs tri" style="left:633px;top:300px"></div><div class="abs tri" style="left:633px;top:320px"></div><div class="abs tri" style="left:633px;top:340px"></div><div class="abs tri" style="left:633px;top:360px"></div><div class="abs tri" style="left:633px;top:380px"></div><div class="abs tri" style="left:633px;top:400px"></div><div class="abs tri" style="left:633px;top:420px"></div><div class="abs tri" style="left:633px;top:440px"></div>
<div class="abs" style="left:825px;top:220px;width:72px;height:19px;background:#e9eef9"></div><div class="abs" style="left:899px;top:220px;width:62px;height:19px;background:#f9e9ea"></div><div class="abs" style="left:821px;top:216px;width:7px;height:7px;background:#fff"></div><div class="abs" style="left:821px;top:236px;width:7px;height:7px;background:#fff"></div><div class="abs" style="left:822px;top:221px;width:4px;height:16px;background:#fff"></div><div class="abs" style="left:827px;top:217px;width:134px;height:4px;background:#fff"></div><div class="abs" style="left:827px;top:238px;width:134px;height:4px;background:#fff"></div><div class="abs" style="left:895px;top:216px;width:7px;height:7px;background:#fff"></div><div class="abs" style="left:895px;top:236px;width:7px;height:7px;background:#fff"></div><div class="abs" style="left:896px;top:221px;width:4px;height:16px;background:#fff"></div><div class="abs" style="left:959px;top:216px;width:7px;height:7px;background:#fff"></div><div class="abs" style="left:959px;top:236px;width:7px;height:7px;background:#fff"></div><div class="abs" style="left:960px;top:220px;width:155px;height:19px;background:#fff"></div><div class="abs" style="left:964px;top:217px;width:66px;height:3px;background:#fff"></div><div class="abs" style="left:964px;top:238px;width:66px;height:4px;background:#fff"></div><div class="abs" style="left:822px;top:217px;width:5px;height:5px;background:#2f62c6"></div><div class="abs" style="left:822px;top:237px;width:5px;height:5px;background:#2f62c6"></div><div class="abs" style="left:828px;top:218px;width:67px;height:2px;background:#2f62c6"></div><div class="abs" style="left:828px;top:239px;width:67px;height:2px;background:#2f62c6"></div><div class="abs" style="left:823px;top:223px;width:2px;height:13px;background:#2f62c6"></div><div class="abs" style="left:896px;top:217px;width:5px;height:5px;background:#c0323f"></div><div class="abs" style="left:896px;top:237px;width:5px;height:5px;background:#c0323f"></div><div class="abs" style="left:902px;top:218px;width:57px;height:2px;background:#c0323f"></div><div class="abs" style="left:902px;top:239px;width:57px;height:2px;background:#c0323f"></div><div class="abs" style="left:897px;top:223px;width:2px;height:13px;background:#c0323f"></div><div class="abs" style="left:960px;top:217px;width:5px;height:3px;background:#c0323f"></div><div class="abs" style="left:960px;top:220px;width:3px;height:2px;background:#c0323f"></div><div class="abs" style="left:960px;top:239px;width:5px;height:3px;background:#c0323f"></div><div class="abs" style="left:960px;top:237px;width:3px;height:2px;background:#c0323f"></div><div class="abs" style="left:966px;top:218px;width:62px;height:2px;background:#217346"></div><div class="abs" style="left:966px;top:239px;width:57px;height:2px;background:#217346"></div><div class="abs" style="left:961px;top:223px;width:2px;height:13px;background:#217346"></div><div class="abs" style="left:1024px;top:239px;width:5px;height:3px;background:#217346"></div><div class="c r" style="left:825px;top:220px;width:71.5px">1</div><div class="c r" style="left:899px;top:220px;width:61.5px">6<i style="margin:0 .25px">.</i>75</div><div class="c" style="left:965.2px;top:220px"><i style="margin:0 -0.18px 0 -0.18px">=</i><i style="margin:0 0.25px 0 0.25px">I</i><i style="margin:0 -0.35px 0 -0.35px;display:inline-block;transform:scaleX(0.91)">F</i><i style="margin:0 0.4px 0 0.4px">(</i><i style="margin:0 1.25px 0 1.25px;display:inline-block;transform:scaleX(1.17);color:#3e6fc9">M</i><i style="color:#3e6fc9">1</i><i style="color:#3e6fc9">1</i><i style="margin:0 -0.18px 0 -0.18px">=</i>1<i style="margin:0 0.25px 0 0.25px">,</i><i style="margin:0 0.45px 0 0.45px;display:inline-block;transform:scaleX(1.1);color:#cf3f3c">N</i><i style="color:#cf3f3c">1</i><i style="color:#cf3f3c">1</i><i style="margin:0 1.05px 0 1.05px;display:inline-block;transform:scaleX(1.3)">*</i>50<i style="margin:0 0.25px 0 0.25px">,</i><i style="margin:0 0.76px 0 0.76px;display:inline-block;transform:scaleX(1.3)">&quot;</i><i style="margin:0 0.4px 0 0.4px">-</i><i style="margin:0 0.4px 0 0.4px">-</i><i style="margin:0 0.4px 0 0.4px">-</i><i style="margin:0 0.76px 0 0.76px;display:inline-block;transform:scaleX(1.3)">&quot;</i><i style="margin:0 0.4px 0 0.4px">)</i></div><div class="abs" style="left:1113px;top:221px;width:1px;height:18px;background:#222"></div></div>
</body></html>
